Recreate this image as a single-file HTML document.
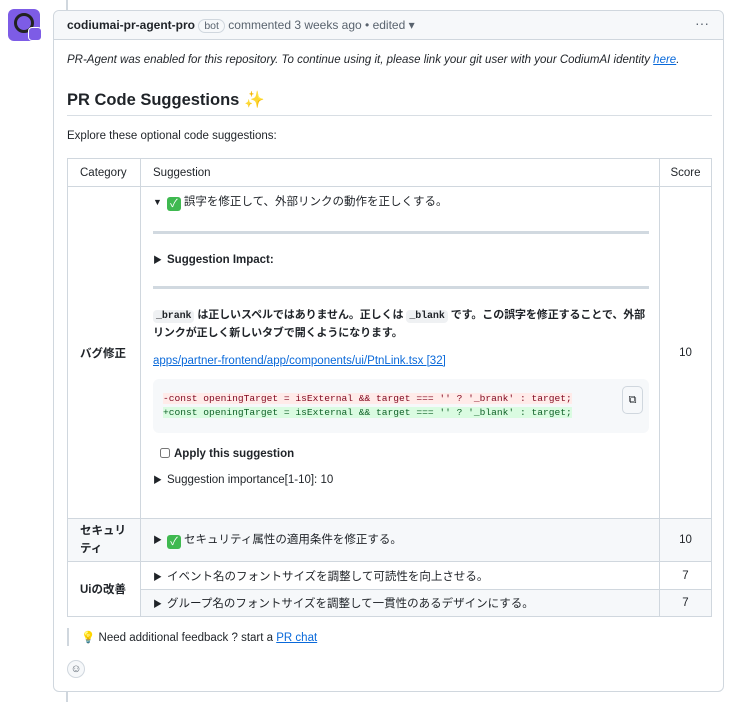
<!DOCTYPE html>
<html><head><meta charset="utf-8"><style>
*{box-sizing:border-box;margin:0;padding:0}
body{width:735px;height:702px;background:#fff;font-family:"Liberation Sans","Noto Sans CJK JP",sans-serif;font-size:11.5px;color:#1f2328;position:relative;overflow:hidden}
.abs{position:absolute}
a{color:#0969da;text-decoration:underline}
.tl{left:66px;width:2px;background:#d0d7de}
.box{left:53px;top:10px;width:671px;height:682px;border:1px solid #d0d7de;border-radius:6px;background:#fff}
.hdr{left:0;top:0;width:669px;height:29px;background:#f6f8fa;border-bottom:1px solid #d0d7de;border-radius:6px 6px 0 0}
table{position:absolute;left:13px;top:147px;width:645px;border-collapse:collapse;table-layout:fixed}
td,th{border:1px solid #d0d7de;padding:0 12px;text-align:left;vertical-align:middle;font-weight:normal}
code{font-family:"Liberation Mono",monospace;background:#eff1f3;border-radius:4px;padding:1px 3px;font-size:10px}
.tri{font-size:9px;margin-right:5px}
.chk{display:inline-block;width:14px;height:14px;background:#3fb950;border-radius:3px;color:#fff;font-size:11px;line-height:14px;text-align:center;vertical-align:-2px;margin-right:3px}
.hr{height:3px;background:#d1d9e0;margin:0}
</style></head><body>
<div class="abs tl" style="top:0;height:10px"></div>
<div class="abs tl" style="top:692px;height:10px"></div>
<div class="abs" style="left:8px;top:9px;width:32px;height:32px;border-radius:6px;background:#7d5ce6"></div>
<div class="abs" style="left:14px;top:13px;width:20px;height:20px;border-radius:50%;border:3px solid #222;"></div>
<div class="abs" style="left:28px;top:27px;width:14px;height:14px;border-radius:4px;background:#7d5ce6;border:1px solid #fff"></div>
<div class="abs box">
 <div class="abs hdr"></div>
 <div class="abs" style="left:13px;top:7px;font-size:12px;white-space:nowrap"><b>codiumai-pr-agent-pro</b> <span style="border:1px solid #d0d7de;border-radius:10px;padding:0 5px;font-size:10.5px;color:#59636e">bot</span> <span style="color:#59636e">commented 3 weeks ago • edited ▾</span></div>
 <div class="abs" style="left:641px;top:4px;color:#59636e;font-size:14px">···</div>
 <div class="abs" style="left:13px;top:43px;font-style:italic;white-space:nowrap">PR-Agent was enabled for this repository. To continue using it, please link your git user with your CodiumAI identity <a>here</a>.</div>
 <div class="abs" style="left:13px;top:80px;font-size:16.5px;font-weight:bold">PR Code Suggestions <span style="color:#e8b820">✨</span></div>
 <div class="abs" style="left:13px;top:104px;width:645px;height:1px;background:#d8dee4"></div>
 <div class="abs" style="left:13px;top:119px">Explore these optional code suggestions:</div>
 <table>
  <tr style="height:28px"><th style="width:73px">Category</th><th style="padding-right:10px">Suggestion</th><th style="width:52px;padding:0;text-align:center">Score</th></tr>
  <tr style="height:332px"><td><b>バグ修正</b></td><td style="vertical-align:top;padding-top:6px;padding-right:10px">
   <div><span class="tri">▼</span><span class="chk">✓</span>誤字を修正して、外部リンクの動作を正しくする。</div>
   <div class="hr" style="margin-top:20px"></div>
   <div style="margin-top:19px"><span class="tri">▶</span><b>Suggestion Impact:</b></div>
   <div class="hr" style="margin-top:20px"></div>
   <div style="margin-top:18px;font-weight:bold;line-height:17px;font-size:11px;letter-spacing:-0.1px"><code>_brank</code> は正しいスペルではありません。正しくは <code>_blank</code> です。この誤字を修正することで、外部リンクが正しく新しいタブで開くようになります。</div>
   <div style="margin-top:13px"><a>apps/partner-frontend/app/components/ui/PtnLink.tsx [32]</a></div>
   <div style="margin-top:12px;background:#f6f8fa;border-radius:6px;height:54px;position:relative;padding:13px 10px;font-family:'Liberation Mono',monospace;font-size:9.6px;line-height:14px">
    <div><span style="background:#ffebe9;color:#82071e">-const openingTarget = isExternal &amp;&amp; target === '' ? '_brank' : target;</span></div>
    <div><span style="background:#dafbe1;color:#116329">+const openingTarget = isExternal &amp;&amp; target === '' ? '_blank' : target;</span></div>
    <div style="position:absolute;right:6px;top:7px;width:21px;height:28px;border:1px solid #d0d7de;border-radius:5px;background:#f6f8fa;text-align:center;line-height:26px;font-family:'DejaVu Sans';font-size:11px">⧉</div>
   </div>
   <div style="margin-top:15px;padding-left:7px"><input type="checkbox" style="width:10px;height:10px;vertical-align:-1px;margin-right:4px"><b>Apply this suggestion</b></div>
   <div style="margin-top:13px"><span class="tri">▶</span>Suggestion importance[1-10]: 10</div>
  </td><td style="text-align:center;padding:0">10</td></tr>
  <tr style="height:43px;background:#f6f8fa"><td><b style="line-height:18px">セキュリティ</b></td><td><span class="tri">▶</span><span class="chk">✓</span>セキュリティ属性の適用条件を修正する。</td><td style="text-align:center;padding:0">10</td></tr>
  <tr style="height:28px"><td rowspan="2"><b>Uiの改善</b></td><td><span class="tri">▶</span>イベント名のフォントサイズを調整して可読性を向上させる。</td><td style="text-align:center;padding:0">7</td></tr>
  <tr style="height:27px;background:#f6f8fa"><td><span class="tri">▶</span>グループ名のフォントサイズを調整して一貫性のあるデザインにする。</td><td style="text-align:center;padding:0">7</td></tr>
 </table>
 <div class="abs" style="left:13px;top:617px;width:2px;height:18px;background:#d0d7de"></div>
 <div class="abs" style="left:27px;top:619px">💡 Need additional feedback ? start a <a>PR chat</a></div>
 <div class="abs" style="left:13px;top:649px;width:18px;height:18px;border-radius:50%;background:#f6f8fa;border:1px solid #d0d7de;text-align:center;line-height:16px;font-size:11px;color:#59636e">☺</div>
</div>
</body></html>
